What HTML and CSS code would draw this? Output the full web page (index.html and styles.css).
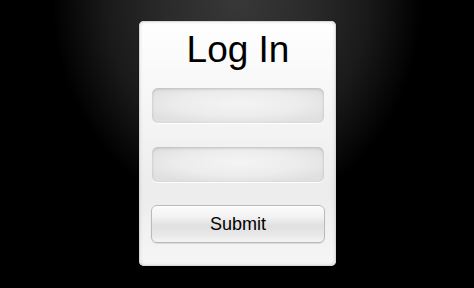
FILE: index.html
```html
<!DOCTYPE html>
<html>
<head>
<meta charset="utf-8">
<link rel="stylesheet" href="styles.css">
</head>
<body>
<div class="stage">
  <form class="card">
    <h1 class="title">Log In</h1>
    <input class="field" type="text">
    <input class="field field-second" type="password">
    <button class="submit" type="button">Submit</button>
  </form>
</div>
</body>
</html>
```
FILE: styles.css
```css
html, body {
  margin: 0;
  height: 100%;
}
body {
  background: #000 radial-gradient(ellipse 185px 215px at 50% 0, #383838 0%, #2a2a2a 40%, #1a1a1a 70%, #000 100%) no-repeat;
  font-family: "Liberation Sans", Arial, sans-serif;
  overflow: hidden;
}
.stage {
  display: flex;
  justify-content: center;
  padding-top: 21px;
}
.card {
  box-sizing: border-box;
  width: 197px;
  height: 245px;
  margin: 0 0 0 1px;
  border-radius: 5px;
  background: linear-gradient(to bottom, #ffffff 0%, #f4f4f4 40%, #ececec 70%, #f6f6f6 100%);
  box-shadow: inset 0 0 0 1px #d8d8d8, inset 0 0 4px rgba(0,0,0,0.18), 0 1px 2px rgba(0,0,0,0.6);
  display: flex;
  flex-direction: column;
  align-items: center;
  padding: 10px 12px 0 13px;
}
.title {
  margin: 0;
  font-weight: normal;
  font-size: 37px;
  line-height: 37px;
  color: #000;
  text-align: center;
}
.field {
  box-sizing: border-box;
  display: block;
  width: 172px;
  height: 35px;
  margin: 20px 0 0 0;
  border: none;
  border-radius: 6px;
  background: radial-gradient(ellipse 60% 60% at 50% 45%, #f4f4f4 0%, #ececec 60%, #e0e0e0 100%);
  box-shadow: inset 0 1px 3px rgba(0,0,0,0.18), 0 1px 0 rgba(255,255,255,0.9);
  outline: none;
}
.field-second {
  margin-top: 24px;
}
.submit {
  box-sizing: border-box;
  display: block;
  width: 174px;
  height: 38px;
  margin: 23px 0 0 0;
  border: 1px solid #b9b9b9;
  border-radius: 6px;
  background: linear-gradient(to bottom, #fbfbfb 0%, #f2f2f2 30%, #e0e0e0 55%, #e8e8e8 80%, #f4f4f4 100%);
  box-shadow: inset 0 1px 0 #fff, 0 1px 1px rgba(0,0,0,0.1);
  font-family: "Liberation Sans", Arial, sans-serif;
  font-size: 18px;
  color: #000;
  padding: 0;
}
```
